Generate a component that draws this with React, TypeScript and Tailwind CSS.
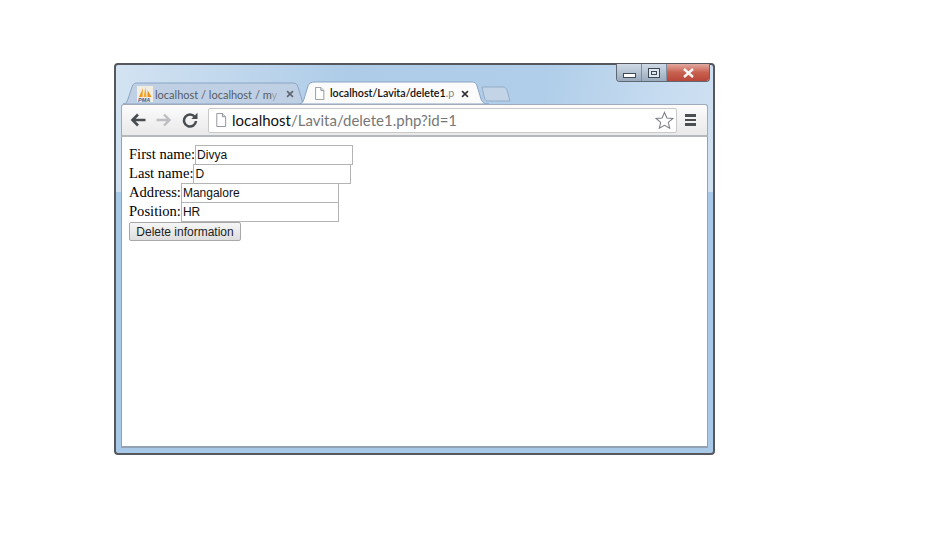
import React from 'react'

const tabFont = { fontFamily: 'Lato, "Open Sans", sans-serif' }

function PageIcon({ className }: { className?: string }) {
  return (
    <svg viewBox="0 0 12 15" className={className} fill="none">
      <path d="M1.5 .5H7.5L11 4V14.5H1.5Z" fill="#fff" stroke="#8a8f96" />
      <path d="M7.5 .5V4H11" fill="#e6e6e6" stroke="#8a8f96" />
    </svg>
  )
}

function PmaIcon() {
  return (
    <svg viewBox="0 0 16 16" className="w-[16px] h-[16px] shrink-0">
      <rect width="16" height="16" fill="#f1ede3" />
      <path d="M2 11 L6 2 L5.5 11Z" fill="#f19a1c" />
      <path d="M6.5 11 L8.5 1 L9.5 11Z" fill="#f4ab2c" />
      <path d="M10.5 11 L10.5 4 L14.5 11Z" fill="#ee9018" />
      <text x="1" y="15.5" fontSize="5.5" fontWeight="700" fontStyle="italic" fill="#3a5a92" fontFamily="Liberation Sans, sans-serif">PMA</text>
    </svg>
  )
}

function CloseX({ color }: { color: string }) {
  return (
    <svg viewBox="0 0 9 9" className="w-[8px] h-[8px] shrink-0">
      <path d="M1.2 1.2L7.8 7.8M7.8 1.2L1.2 7.8" stroke={color} strokeWidth="1.8" />
    </svg>
  )
}

function WindowButtons() {
  return (
    <div className="absolute right-[-2px] top-[-1px] flex h-[18px] w-[94px] overflow-hidden rounded-b-[4px] border border-t-0 border-[#5f6770]">
      <div className="flex w-[25px] items-end justify-center border-r border-[#7e8ea0] bg-gradient-to-b from-[#cfdae6] to-[#9aabbd] pb-[3px]">
        <div className="h-[5px] w-[13px] border border-[#3f4954] bg-white" />
      </div>
      <div className="flex w-[25px] items-center justify-center border-r border-[#7e8ea0] bg-gradient-to-b from-[#cfdae6] to-[#9aabbd]">
        <div className="flex h-[10px] w-[12px] items-center justify-center border border-[#3f4954] bg-[#dfe8f1]">
          <div className="h-[4px] w-[6px] border border-[#3f4954]" />
        </div>
      </div>
      <div className="flex flex-1 items-center justify-center bg-gradient-to-b from-[#e0aaa0] via-[#c8604f] to-[#b8463a]">
        <svg viewBox="0 0 13 10" className="h-[10px] w-[13px]">
          <path d="M2 1L11 9M11 1L2 9" stroke="#f5f5f5" strokeWidth="2.4" />
        </svg>
      </div>
    </div>
  )
}

function TabStrip() {
  return (
    <div className="relative flex h-[39px] items-end pl-[2px]">
      <WindowButtons />
      {/* background tab */}
      <div className="relative flex h-[22px] w-[180px] items-center pl-[14px] pr-[9px]">
        <svg viewBox="0 0 180 22" className="absolute inset-0 h-full w-full">
          <path d="M0 22C3 22 4 20 5 17L9 5C10 2 11 1 15 1H170C173 1 174 2 175 5L179 18C179.500 21 180 22 180 22Z" fill="#bfd0e4" stroke="#8ba5c4" />
        </svg>
        <div className="relative flex w-full items-center gap-[2px] pt-[2px]" style={tabFont}>
          <PmaIcon />
          <span className="w-[130px] whitespace-nowrap text-[11px] leading-none text-[#555c66]">
            localhost / localhost / m<span className="text-[#9aa3ae]">y</span>
          </span>
          <CloseX color="#5c6470" />
        </div>
      </div>
      {/* active tab */}
      <div className="relative z-10 -ml-[4px] flex h-[23px] w-[190px] items-center pl-[15px] pr-[9px]">
        <svg viewBox="0 0 190 23" className="absolute inset-0 h-full w-full">
          <path d="M0 23C3 23 4 21 5 18L9 5C10 2 12 1 16 1H172C176 1 177 2 178 5L182 18C183 21 185 23 190 23Z" fill="#fbfbfb" stroke="#8ba5c4" />
        </svg>
        <div className="relative flex w-full items-center pt-[2px]" style={tabFont}>
          <PageIcon className="h-[13px] w-[11px] shrink-0" />
          <span className="ml-[5px] w-[131px] whitespace-nowrap text-[10.7px] font-semibold leading-none text-[#111]">
            localhost/Lavita/delete1<span className="font-normal text-[#888]">.p</span>
          </span>
          <CloseX color="#333" />
        </div>
      </div>
      {/* new tab button */}
      <svg viewBox="0 0 30 16" className="mb-[2px] -ml-[8px] h-[16px] w-[30px]">
        <path d="M1 1H22C24 1 25 2 26 4L29 15H7C5 15 4 14 3.5 12Z" fill="#c3d4e6" stroke="#94adc9" />
      </svg>
    </div>
  )
}

function Toolbar() {
  return (
    <div className="flex h-[33px] items-center rounded-t-[3px] border border-b-[2px] border-[#9fabbb] border-b-[#b5b8bc] bg-gradient-to-b from-[#fcfcfc] to-[#e9e9e9] pl-[8px] pr-[8px]">
      <svg viewBox="0 0 16 14" className="h-[14px] w-[16px] shrink-0">
        <path d="M8 1.5L2.5 7L8 12.5M3 7H15.5" fill="none" stroke="#484d52" strokeWidth="2.6" />
      </svg>
      <svg viewBox="0 0 16 14" className="ml-[10px] h-[14px] w-[16px] shrink-0">
        <path d="M8 1.5L13.5 7L8 12.5M13 7H.5" fill="none" stroke="#bcbec1" strokeWidth="2.4" />
      </svg>
      <svg viewBox="0 0 16 16" className="ml-[10px] h-[16px] w-[16px] shrink-0">
        <path d="M13 5.2A6 6 0 1 0 14 9" fill="none" stroke="#484d52" strokeWidth="2.5" />
        <path d="M15.5 .8V7H9.3Z" fill="#484d52" />
      </svg>
      <div className="ml-[10px] flex h-[25px] w-[469px] items-center rounded-[2px] border border-[#c9c9c9] bg-white pl-[6px] pr-[2px]">
        <PageIcon className="h-[14px] w-[12px] shrink-0" />
        <span className="ml-[5px] whitespace-nowrap text-[15px] leading-none text-[#777]" style={tabFont}>
          <span className="text-[#111]">localhost</span>/Lavita/delete1.php?id=1
        </span>
        <svg viewBox="0 0 20 20" className="ml-auto h-[19px] w-[19px] shrink-0">
          <path d="M10 1.5L12.5 7.3L18.8 7.9L14 12L15.5 18.2L10 15L4.5 18.2L6 12L1.2 7.9L7.5 7.3Z" fill="#fff" stroke="#7b7f84" strokeWidth="1.1" />
        </svg>
      </div>
      <div className="ml-[8px] flex w-[11px] flex-col gap-[2px]">
        <div className="h-[2.5px] bg-[#4a4f54]" />
        <div className="h-[2.5px] bg-[#4a4f54]" />
        <div className="h-[2.5px] bg-[#4a4f54]" />
      </div>
    </div>
  )
}

function Field({ label, value }: { label: string; value: string }) {
  return (
    <div className="flex h-[19px] items-center">
      <label className="whitespace-nowrap text-[14.6px] leading-none text-black">{label}</label>
      <input
        readOnly
        value={value}
        className="h-[20px] w-[158px] border border-[#b4b4b4] bg-white px-[1px] text-[12px] leading-none text-[#111] outline-none"
        style={{ fontFamily: '"Liberation Sans", Arial, sans-serif' }}
      />
    </div>
  )
}

export default function App() {
  return (
    <div className="h-[548px] w-[939px] overflow-hidden bg-white pl-[114px] pt-[63px]">
      <div className="h-[392px] w-[601px] rounded-[4px] border-[2px] border-[#55595e] bg-[linear-gradient(to_bottom,transparent_127px,#a9c9e8_127px),linear-gradient(100deg,#d3e3f2_0%,#aeccE8_35%,#b0cee9_65%,#c9ddf1_85%,#d5e4f2_100%)] px-[5px]">
        <TabStrip />
        <Toolbar />
        <div className="h-[311px] border border-t-0 border-b-[2px] border-[#93a3b5] bg-white pl-[7px] pt-[8px]" style={{ fontFamily: '"Liberation Serif", "Times New Roman", serif' }}>
          <form>
            <Field label="First name:" value="Divya" />
            <Field label="Last name:" value="D" />
            <Field label="Address:" value="Mangalore" />
            <Field label="Position:" value="HR" />
            <button
              type="button"
              className="mt-[1px] flex h-[19px] w-[112px] items-center justify-center rounded-[2px] border border-[#a8a8a8] bg-gradient-to-b from-[#f6f6f6] to-[#dedede] text-[12px] leading-none text-[#222]"
              style={{ fontFamily: '"Liberation Sans", Arial, sans-serif' }}
            >
              Delete information
            </button>
          </form>
        </div>
      </div>
    </div>
  )
}
